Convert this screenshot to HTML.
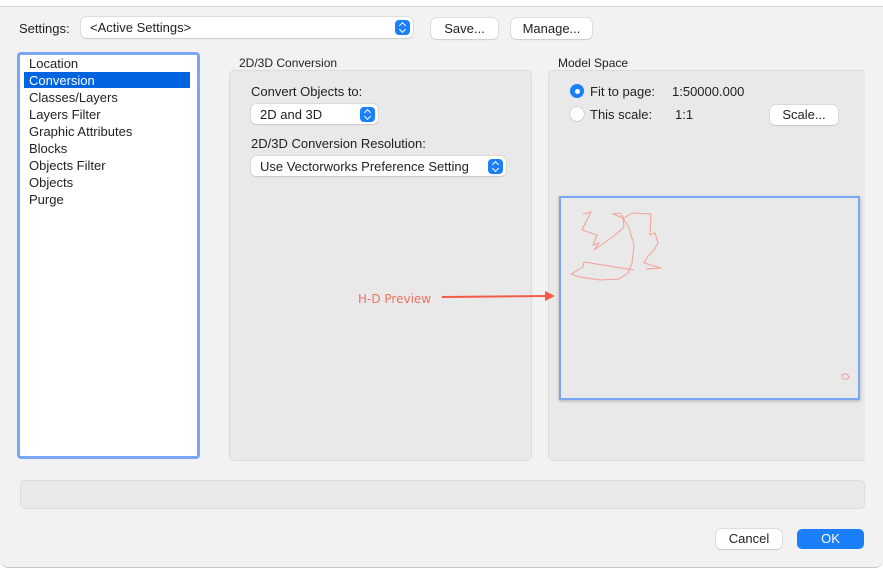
<!DOCTYPE html><html><head><style>
*{box-sizing:border-box;margin:0;padding:0}
body{width:883px;height:569px;background:#fff;font-family:"Liberation Sans",sans-serif;font-size:13px;color:#222;position:relative;overflow:hidden}
#win{position:absolute;left:0;top:6px;width:883px;height:562px;background:#f2f2f2;border-top:1px solid #d6d6d6;border-bottom:1px solid #c8c8c8;border-radius:0 0 8px 8px}
.a{position:absolute}
.btn{position:absolute;background:#fff;border-radius:5px;box-shadow:0 0 0 .5px #c8c8c8,0 1px 1px rgba(0,0,0,.15);text-align:center;line-height:21px;font-size:13px}
.pop{position:absolute;background:#fff;border-radius:5px;box-shadow:0 0 0 .5px #c8c8c8,0 1px 1px rgba(0,0,0,.15);line-height:21px;padding-left:9px}
.pop i{position:absolute;right:3px;top:3px;width:15px;height:15px;border-radius:4px;background:#1a7ff8}
.pop i:before,.pop i:after{content:"";position:absolute;left:5px;width:4px;height:4px;border:solid #fff;border-width:1.5px 1.5px 0 0}
.pop i:before{top:3px;transform:rotate(-45deg)}
.pop i:after{top:7px;transform:rotate(135deg)}
.box{position:absolute;background:#e9e9e9;border:1px solid #dcdcdc;border-radius:5px}
.li{position:absolute;left:29px;font-size:13px}
</style></head><body>
<div id="win"></div>
<div class="a" style="left:19px;top:21px">Settings:</div>
<div class="pop" style="left:81px;top:17px;width:332px;height:21px">&lt;Active Settings&gt;<i></i></div>
<div class="btn" style="left:431px;top:18px;width:67px;height:21px">Save...</div>
<div class="btn" style="left:511px;top:18px;width:81px;height:21px">Manage...</div>
<div class="a" style="left:17px;top:52px;width:183px;height:407px;border:3px solid #7aa7f5;border-radius:4px;background:#fff"></div>
<div class="a" style="left:24px;top:72px;width:166px;height:16px;background:#0064e1"></div>
<div class="li" style="top:56px">Location</div>
<div class="li" style="top:73px;color:#fff">Conversion</div>
<div class="li" style="top:90px">Classes/Layers</div>
<div class="li" style="top:107px">Layers Filter</div>
<div class="li" style="top:124px">Graphic Attributes</div>
<div class="li" style="top:141px">Blocks</div>
<div class="li" style="top:158px">Objects Filter</div>
<div class="li" style="top:175px">Objects</div>
<div class="li" style="top:192px">Purge</div>
<div class="a" style="left:239px;top:56px;font-size:12px">2D/3D Conversion</div>
<div class="box" style="left:229px;top:70px;width:303px;height:391px"></div>
<div class="a" style="left:251px;top:84px">Convert Objects to:</div>
<div class="pop" style="left:251px;top:104px;width:127px;height:20px">2D and 3D<i></i></div>
<div class="a" style="left:251px;top:136px">2D/3D Conversion Resolution:</div>
<div class="pop" style="left:251px;top:156px;width:255px;height:20px">Use Vectorworks Preference Setting<i></i></div>
<div class="a" style="left:558px;top:56px;font-size:12px">Model Space</div>
<div class="box" style="left:548px;top:70px;width:317px;height:391px;border-right:none;border-radius:5px 0 0 5px"></div>
<div class="a" style="left:570px;top:84px;width:14px;height:14px;border-radius:50%;background:#1a7ff8"><div class="a" style="left:4.5px;top:4.5px;width:5px;height:5px;border-radius:50%;background:#fff"></div></div>
<div class="a" style="left:590px;top:84px">Fit to page:</div>
<div class="a" style="left:672px;top:84px">1:50000.000</div>
<div class="a" style="left:570px;top:107px;width:14px;height:14px;border-radius:50%;background:#fff;box-shadow:0 0 0 .5px #bbb,0 1px 1px rgba(0,0,0,.1)"></div>
<div class="a" style="left:590px;top:107px">This scale:</div>
<div class="a" style="left:675px;top:107px">1:1</div>
<div class="btn" style="left:770px;top:105px;width:68px;height:20px;line-height:20px">Scale...</div>
<div class="a" style="left:559px;top:196px;width:301px;height:204px;border:2px solid #7aa7f5;background:#e9e9e9;box-shadow:0 1px 3px rgba(0,0,0,.25)"></div>
<svg class="a" style="left:0;top:0" width="883" height="569"><g fill="none" stroke="#f2a096" stroke-width="1">
<path d="M583 214 L591 212 L582 230 L597 235 L593 245 L599 243 L594 250 L614 236 L624 227 L623 218 L613 214 L620 213 L624 218 L632 213 L651 214 L650 235 L655 233 L658 243 L654 250 L648 256 L644 263 L661 268 L646 269 M623 218 L629 228 L634 245 L632 263 L628 273 L619 279 L600 280 L580 277 L571 274 L583 267 L584 262 L634 270"/>
<path d="M842 375 q5 -3 7 2 q-2 4 -7 1 z"/></g>
<text x="358" y="303" font-family="DejaVu Sans,sans-serif" font-size="12" fill="#f27263">H-D Preview</text>
<path d="M442 297 L547 296" stroke="#f25a4a" stroke-width="2"/><path d="M545 291 L555 296 L545 301 z" fill="#f25a4a"/></svg>
<div class="box" style="left:20px;top:480px;width:845px;height:29px"></div>
<div class="btn" style="left:716px;top:529px;width:66px;height:20px;line-height:20px">Cancel</div>
<div class="btn" style="left:797px;top:529px;width:67px;height:20px;line-height:20px;background:#1a7ff8;color:#fff;box-shadow:none">OK</div>
</body></html>
